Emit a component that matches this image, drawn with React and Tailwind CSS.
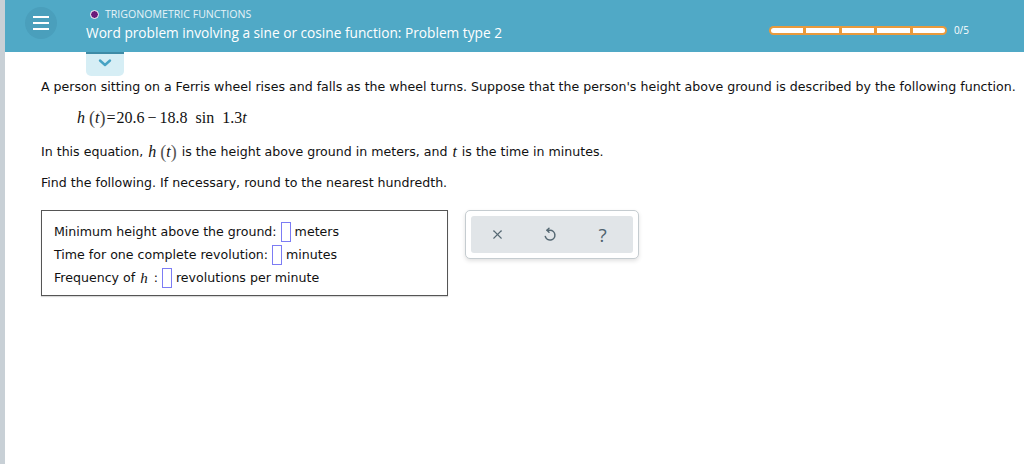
import React from 'react';
import { X } from 'lucide-react';

// Orange segmented progress bar in the header
function Progress() {
  return (
    <div className="flex items-center gap-[7px]">
      <div className="flex h-[9px] w-[178px] gap-[3px] rounded-full bg-[#e99a3c] p-[2px]">
        {[0, 1, 2, 3, 4].map((i) => (
          <div
            key={i}
            className={
              'flex-1 bg-white ' +
              (i === 0 ? 'rounded-l-full' : '') +
              (i === 4 ? 'rounded-r-full' : '')
            }
          />
        ))}
      </div>
      <span className="text-[10px] text-white" style={{ fontFamily: '"Open Sans", sans-serif' }}>
        0/5
      </span>
    </div>
  );
}

function Blank() {
  return <span className="mx-[4px] inline-block h-[20px] w-[10px] border border-[#7c7cf4] align-middle" />;
}

function ResetIcon() {
  return (
    <svg width="14" height="15" viewBox="0 0 14 15" fill="none" stroke="#556873" strokeWidth="1.5" strokeLinecap="round" strokeLinejoin="round">
      <path d="M6 1.2 L4 3.2 L6 5.2" />
      <path d="M4 3.2 H7 A4.9 4.9 0 1 1 2.3 9.5" />
    </svg>
  );
}

const serif = { fontFamily: '"Liberation Serif", serif' };

export default function App() {
  return (
    <div className="flex h-[464px] w-[1024px] bg-white" style={{ fontFamily: '"DejaVu Sans", Verdana, sans-serif' }}>
      <div className="w-[5px] shrink-0 bg-[#c8d0d6]" />

      <div className="flex min-w-0 flex-1 flex-col">
        {/* Header */}
        <header className="flex h-[52px] shrink-0 items-center bg-[#50a9c6] pl-[20px] pr-[55px]" style={{ fontFamily: '"Open Sans", sans-serif' }}>
          <div className="-mt-[6px] flex h-[32px] w-[32px] items-center justify-center rounded-full bg-[#4a9fbc]">
            <div className="flex flex-col gap-[4px]">
              <span className="block h-[2px] w-[16px] bg-white" />
              <span className="block h-[2px] w-[16px] bg-white" />
              <span className="block h-[2px] w-[16px] bg-white" />
            </div>
          </div>
          <div className="-mt-[3px] ml-[29px] flex flex-col">
            <div className="flex items-center gap-[6px] text-[10.6px] leading-[12px] text-[#e6f3f8]">
              <span className="ml-[4px] inline-block h-[9px] w-[9px] rounded-full border border-white bg-[#6b1a7a]" />
              TRIGONOMETRIC FUNCTIONS
            </div>
            <div className="mt-[5px] text-[13.7px] font-medium leading-[16px] text-white">
              Word problem involving a sine or cosine function: Problem type 2
            </div>
          </div>
          <div className="ml-auto mt-[8px]">
            <Progress />
          </div>
        </header>

        {/* Collapse tab */}
        <div className="ml-[81px] flex h-[24px] w-[38px] flex-col items-center rounded-b-[5px] bg-[#d6eef5]">
          <div className="h-[2px] w-full bg-[#3e8ba6]" />
          <svg width="14" height="10" viewBox="0 0 14 10" className="mt-[4px]">
            <path d="M2 2.5 L7 7 L12 2.5" fill="none" stroke="#47a3c4" strokeWidth="2.4" strokeLinecap="round" strokeLinejoin="round" />
          </svg>
        </div>

        {/* Body */}
        <div className="pl-[36px] text-[12.6px] text-[#111]">
          <p className="mt-[2px] leading-[18px]">
            A person sitting on a Ferris wheel rises and falls as the wheel turns. Suppose that the person's height above ground is described by the following function.
          </p>

          <div className="ml-[36px] mt-[12px] flex items-center text-[16px] leading-[20px]" style={serif}>
            <i>h</i>
            <span className="ml-[4px] text-[18px] text-[#444]">(</span>
            <i>t</i>
            <span className="text-[18px] text-[#444]">)</span>
            <span className="mx-[1px]">=</span>
            <span>20.6</span>
            <span className="mx-[3px]">−</span>
            <span>18.8</span>
            <span className="ml-[8px]">sin</span>
            <span className="ml-[8px]">1.3</span>
            <i>t</i>
          </div>

          <p className="mt-[14px] flex items-center leading-[20px]">
            In this equation,
            <span className="ml-[5px] flex items-center" style={serif}>
              <i className="text-[16px]">h</i>
              <span className="ml-[4px] text-[18px] text-[#555]">(</span>
              <i className="text-[16px]">t</i>
              <span className="text-[18px] text-[#555]">)</span>
            </span>
            <span className="ml-[5px]">is the height above ground in meters, and</span>
            <i className="mx-[5px] text-[16px]" style={serif}>t</i>
            is the time in minutes.
          </p>

          <p className="mt-[11px] leading-[20px]">Find the following. If necessary, round to the nearest hundredth.</p>

          <div className="mt-[17px] flex items-start gap-[17px]">
            <div className="flex h-[86px] w-[407px] flex-col gap-[3px] border border-[#555] pl-[12px] pt-[11px] leading-[20px] shadow-[0_1px_1px_rgba(0,0,0,0.15)]">
              <div className="flex items-center">
                Minimum height above the ground:<Blank />meters
              </div>
              <div className="flex items-center">
                Time for one complete revolution:<Blank />minutes
              </div>
              <div className="flex items-center">
                Frequency of
                <i className="ml-[5px] mr-[6px] text-[15px]" style={serif}>h</i>
                :<Blank />revolutions per minute
              </div>
            </div>

            <div className="rounded-[5px] border border-[#c5ccd0] bg-white p-[5px] shadow-[0_2px_4px_rgba(0,0,0,0.12)]">
              <div className="grid h-[37px] w-[162px] grid-cols-3 items-center justify-items-center rounded-[3px] bg-[#e1e5e8] pr-[4px] text-[#556873]">
                <X size={15} strokeWidth={1.7} />
                <ResetIcon />
                <span className="text-[19px] leading-[20px] text-[#4f626e]" style={{ fontFamily: '"Open Sans", sans-serif' }}>?</span>
              </div>
            </div>
          </div>
        </div>
      </div>
    </div>
  );
}
